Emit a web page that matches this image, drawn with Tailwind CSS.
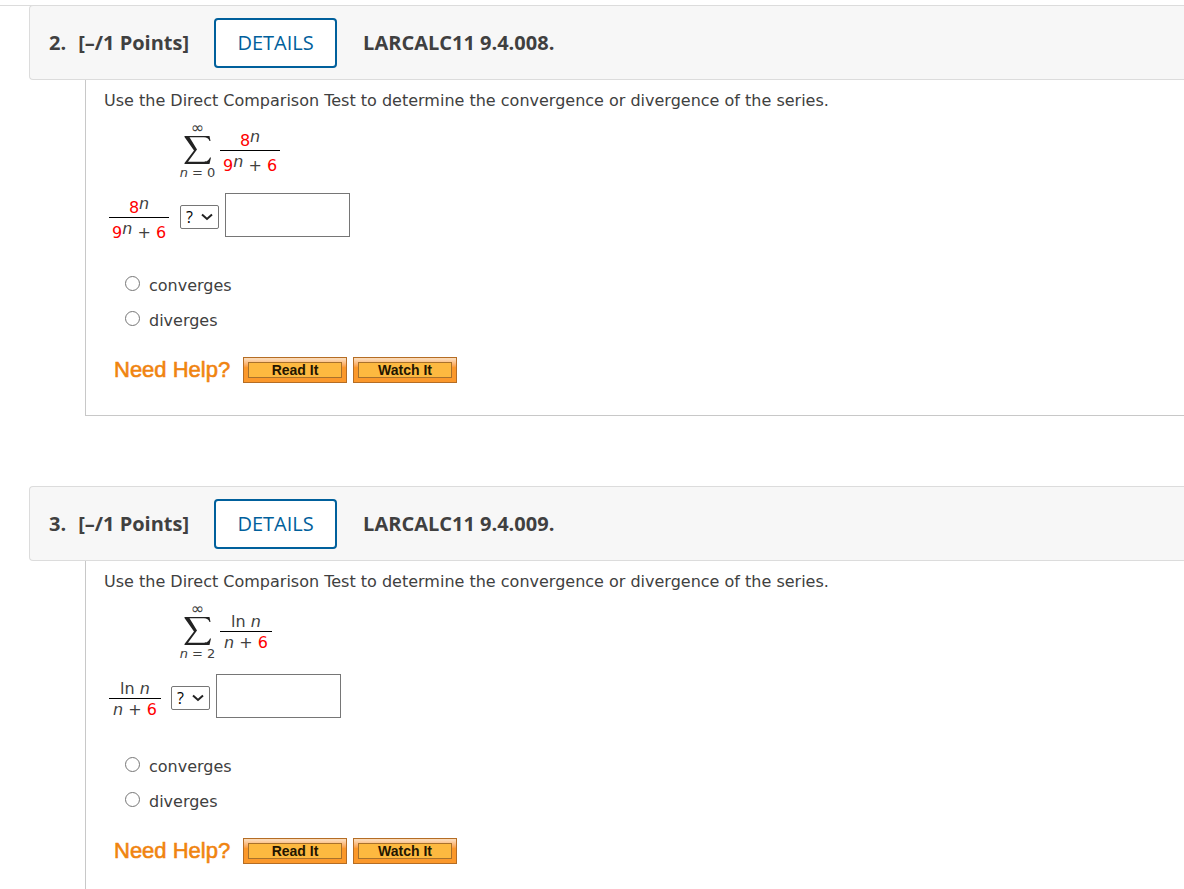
<!DOCTYPE html>
<html lang="en">

<head>
    <meta charset="UTF-8">
    <meta name="viewport" content="width=device-width, initial-scale=1.0">
    <script src="https://cdn.jsdelivr.net/npm/@tailwindcss/browser@4"></script>
    <title>Homework - Direct Comparison Test</title>
</head>

<body class="bg-white font-['DejaVu_Sans',sans-serif] text-base text-[#404040] overflow-x-hidden">
    <div class="h-[5px]"></div>
    <main class="border-t border-[#dcdcdc]">

        <!-- Question 2 -->
        <section class="ml-[29px] -mt-px mb-[70px]">
            <header class="flex items-center h-[75px] pl-[19px] border border-r-0 border-[#dcdcdc] rounded-l-sm bg-[#f7f7f7] font-['Open_Sans',sans-serif] text-xl font-bold">
                <h2 class="flex gap-3"><span>2.</span><span>[–/1 Points]</span></h2>
                <button type="button" class="ml-[25px] w-[123px] h-[50px] border-2 border-[#00609c] rounded bg-white font-medium text-[#00609c]">DETAILS</button>
                <span class="ml-[26px]">LARCALC11 9.4.008.</span>
            </header>
            <div class="ml-14 pl-[18px] pt-[9px] pb-8 border-l border-b border-[#c8c8c8]">
                <p class="leading-6">Use the Direct Comparison Test to determine the convergence or divergence of the series.</p>

                <div class="flex items-center gap-1 mt-2 ml-[75px] h-[60px]">
                    <div class="flex flex-col items-center w-[37px] text-[13px] whitespace-nowrap">
                        <span class="h-[14px] text-base leading-[14px]">∞</span>
                        <svg class="w-[27px] h-[30px]" viewBox="0 0 27 30" fill="#222">
                            <path d="M0.500 1H25.500L26.500 6H25.500C24.500 3.500 23 2.300 20 2.300H5.500L13 14.500L4 26.700H20C23.500 26.700 24.500 25 26 22.500H27L25.500 29H0.500V28L10 15.500L0.500 2Z" />
                        </svg>
                        <span class="h-4 leading-4"><i>n</i> = 0</span>
                    </div>
                    <div class="mb-0.5 text-center leading-[18px]">
                        <div class="flex items-end justify-center h-6 px-[3px]"><span class="text-[#f00]">8</span><i class="pb-1">n</i></div>
                        <div class="flex items-end h-[25px] px-[3px] border-t border-black"><span class="text-[#f00]">9</span><i class="pb-1">n</i><span class="whitespace-pre"> + </span><span class="text-[#f00]">6</span></div>
                    </div>
                </div>

                <div class="flex items-center mt-[11px] ml-[5px] h-[50px]">
                    <div class="text-center leading-[18px]">
                        <div class="flex items-end justify-center h-6 px-[3px]"><span class="text-[#f00]">8</span><i class="pb-1">n</i></div>
                        <div class="flex items-end h-[25px] px-[3px] border-t border-black"><span class="text-[#f00]">9</span><i class="pb-1">n</i><span class="whitespace-pre"> + </span><span class="text-[#f00]">6</span></div>
                    </div>
                    <div class="relative ml-[11px]">
                        <select aria-label="Comparison" class="block appearance-none w-[39px] h-6 pl-[5px] border border-[#767676] rounded-xs bg-white font-['Open_Sans',sans-serif] text-base leading-5 text-black">
                            <option>?</option>
                            <option>&lt;</option>
                            <option>&gt;</option>
                        </select>
                        <svg class="absolute right-[6px] top-2 w-3 h-2 pointer-events-none" viewBox="0 0 12 8" fill="none" stroke="#222" stroke-width="2">
                            <path d="M1 1.500L6 6L11 1.500" />
                        </svg>
                    </div>
                    <input type="text" aria-label="Comparison series" class="ml-[6px] mb-1 w-[125px] h-11 px-2 border border-[#767676] bg-white">
                </div>

                <div class="mt-[26px] ml-[21px]">
                    <label class="flex items-center gap-[9px] h-[35px]"><input type="radio" name="q2" class="w-[15px] h-[15px] mb-[5px]">converges</label>
                    <label class="flex items-center gap-[9px] h-[35px]"><input type="radio" name="q2" class="w-[15px] h-[15px] mb-[5px]">diverges</label>
                </div>

                <div class="flex items-center mt-[19px] ml-[10px] font-['Liberation_Sans',sans-serif]">
                    <span class="w-[129px] text-[22px] leading-6 font-medium text-[#f08410] [-webkit-text-stroke:0.6px_#f08410]">Need Help?</span>
                    <button type="button" class="w-[104px] h-[26px] p-1 border border-[#b56d24] bg-linear-to-b from-[#fbd9b5] from-5% to-[#fb982b] to-40%"><span class="flex items-center justify-center h-full border border-[#a9712b] bg-[#fdb940] text-sm font-bold text-[#221500]">Read It</span></button>
                    <button type="button" class="ml-[6px] w-[104px] h-[26px] p-1 border border-[#b56d24] bg-linear-to-b from-[#fbd9b5] from-5% to-[#fb982b] to-40%"><span class="flex items-center justify-center h-full border border-[#a9712b] bg-[#fdb940] text-sm font-bold text-[#221500]">Watch It</span></button>
                </div>
            </div>
        </section>

        <!-- Question 3 -->
        <section class="ml-[29px]">
            <header class="flex items-center h-[75px] pl-[19px] border border-r-0 border-[#dcdcdc] rounded-l-sm bg-[#f7f7f7] font-['Open_Sans',sans-serif] text-xl font-bold">
                <h2 class="flex gap-3"><span>3.</span><span>[–/1 Points]</span></h2>
                <button type="button" class="ml-[25px] w-[123px] h-[50px] border-2 border-[#00609c] rounded bg-white font-medium text-[#00609c]">DETAILS</button>
                <span class="ml-[26px]">LARCALC11 9.4.009.</span>
            </header>
            <div class="ml-14 pl-[18px] pt-[9px] pb-8 border-l border-b border-[#c8c8c8]">
                <p class="leading-6">Use the Direct Comparison Test to determine the convergence or divergence of the series.</p>

                <div class="flex items-center gap-1 mt-2 ml-[75px] h-[60px]">
                    <div class="flex flex-col items-center w-[37px] text-[13px] whitespace-nowrap">
                        <span class="h-[14px] text-base leading-[14px]">∞</span>
                        <svg class="w-[27px] h-[30px]" viewBox="0 0 27 30" fill="#222">
                            <path d="M0.500 1H25.500L26.500 6H25.500C24.500 3.500 23 2.300 20 2.300H5.500L13 14.500L4 26.700H20C23.500 26.700 24.500 25 26 22.500H27L25.500 29H0.500V28L10 15.500L0.500 2Z" />
                        </svg>
                        <span class="h-4 leading-4"><i>n</i> = 2</span>
                    </div>
                    <div class="mb-0.5 text-center leading-[18px]">
                        <div class="pt-0.5 px-1">ln <i>n</i></div>
                        <div class="pt-0.5 px-1 border-t border-black"><i>n</i> + <span class="text-[#f00]">6</span></div>
                    </div>
                </div>

                <div class="flex items-center mt-[11px] ml-[5px] h-[50px]">
                    <div class="text-center leading-[18px]">
                        <div class="pt-0.5 px-1">ln <i>n</i></div>
                        <div class="pt-0.5 px-1 border-t border-black"><i>n</i> + <span class="text-[#f00]">6</span></div>
                    </div>
                    <div class="relative ml-[10px]">
                        <select aria-label="Comparison" class="block appearance-none w-[39px] h-6 pl-[5px] border border-[#767676] rounded-xs bg-white font-['Open_Sans',sans-serif] text-base leading-5 text-black">
                            <option>?</option>
                            <option>&lt;</option>
                            <option>&gt;</option>
                        </select>
                        <svg class="absolute right-[6px] top-2 w-3 h-2 pointer-events-none" viewBox="0 0 12 8" fill="none" stroke="#222" stroke-width="2">
                            <path d="M1 1.500L6 6L11 1.500" />
                        </svg>
                    </div>
                    <input type="text" aria-label="Comparison series" class="ml-[6px] mb-1 w-[125px] h-11 px-2 border border-[#767676] bg-white">
                </div>

                <div class="mt-[26px] ml-[21px]">
                    <label class="flex items-center gap-[9px] h-[35px]"><input type="radio" name="q3" class="w-[15px] h-[15px] mb-[5px]">converges</label>
                    <label class="flex items-center gap-[9px] h-[35px]"><input type="radio" name="q3" class="w-[15px] h-[15px] mb-[5px]">diverges</label>
                </div>

                <div class="flex items-center mt-[19px] ml-[10px] font-['Liberation_Sans',sans-serif]">
                    <span class="w-[129px] text-[22px] leading-6 font-medium text-[#f08410] [-webkit-text-stroke:0.6px_#f08410]">Need Help?</span>
                    <button type="button" class="w-[104px] h-[26px] p-1 border border-[#b56d24] bg-linear-to-b from-[#fbd9b5] from-5% to-[#fb982b] to-40%"><span class="flex items-center justify-center h-full border border-[#a9712b] bg-[#fdb940] text-sm font-bold text-[#221500]">Read It</span></button>
                    <button type="button" class="ml-[6px] w-[104px] h-[26px] p-1 border border-[#b56d24] bg-linear-to-b from-[#fbd9b5] from-5% to-[#fb982b] to-40%"><span class="flex items-center justify-center h-full border border-[#a9712b] bg-[#fdb940] text-sm font-bold text-[#221500]">Watch It</span></button>
                </div>
            </div>
        </section>
    </main>
</body>

</html>
